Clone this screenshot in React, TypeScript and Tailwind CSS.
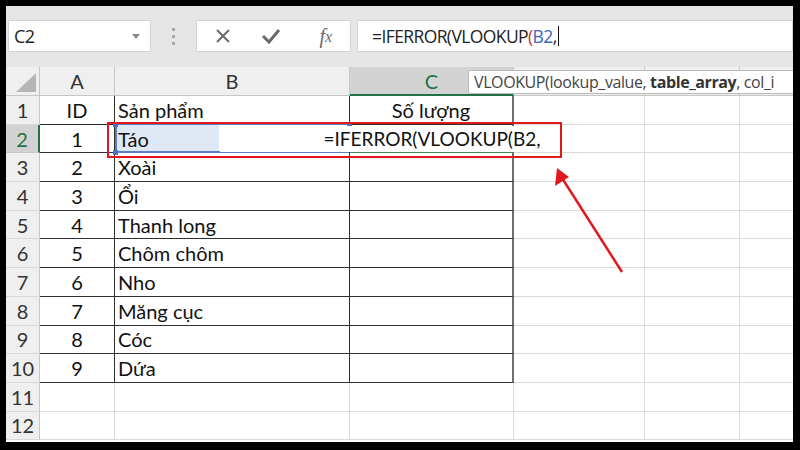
import React from "react";

const cellFont = { fontFamily: "Lato, 'Liberation Sans', sans-serif" };
const uiFont = { fontFamily: "'Open Sans', 'Noto Sans', sans-serif" };

const data: [string, string, string][] = [
  ["ID", "Sản phẩm", "Số lượng"],
  ["1", "Táo", ""],
  ["2", "Xoài", ""],
  ["3", "Ổi", ""],
  ["4", "Thanh long", ""],
  ["5", "Chôm chôm", ""],
  ["6", "Nho", ""],
  ["7", "Măng cục", ""],
  ["8", "Cóc", ""],
  ["9", "Dứa", ""],
  ["", "", ""],
  ["", "", ""],
];

function Row({ idx, vals }: { idx: number; vals: [string, string, string] }) {
  const n = idx + 1;
  const inTable = n <= 10;
  const active = n === 2;
  const tb = inTable ? "border-b-[#2f2f2f]" : "border-b-[#dadada]";
  return (
    <div className="flex h-[28.7px] shrink-0 text-[20px] text-[#111]" style={cellFont}>
      <div
        className={
          active
            ? "w-[34px] shrink-0 flex items-center justify-center bg-[#d2d2d2] text-[#217346] border-r-2 border-r-[#217346] border-b border-b-[#c6c6c6]"
            : "w-[34px] shrink-0 flex items-center justify-center bg-[#efefef] text-[#333] border-r border-r-[#c6c6c6] border-b border-b-[#d8d8d8]"
        }
      >
        {n}
      </div>
      <div className={`w-[75px] shrink-0 flex items-center justify-center border-b border-r ${tb} ${inTable ? "border-r-[#2f2f2f]" : "border-r-[#dadada]"}`}>
        {vals[0]}
      </div>
      <div className={`relative w-[235px] shrink-0 flex items-center pl-[3px] border-b border-r ${tb} ${inTable ? "border-r-[#2f2f2f]" : "border-r-[#dadada]"}`}>
        {active && (
          <>
            <div className="absolute left-0 top-0 bottom-0 w-[104px] bg-[#dfe8f5]" />
            <div className="absolute left-0 right-0 top-[-1px] h-[1px] bg-[#5a7fc4]" />
            <div className="absolute left-0 right-0 bottom-[-1px] h-[2px] bg-[#5a7fc4]" />
            <div className="absolute left-0 top-0 bottom-0 w-[2px] bg-[#5a7fc4]" />
            <div className="absolute left-[-2px] top-[-3px] w-[5px] h-[5px] bg-[#4a72c0]" />
            <div className="absolute left-[-2px] bottom-[-3px] w-[5px] h-[5px] bg-[#4a72c0]" />
            <div className="absolute right-[-3px] top-[-3px] w-[5px] h-[5px] bg-[#4a72c0]" />
          </>
        )}
        <span className="relative">{vals[1]}</span>
      </div>
      <div className={`relative w-[164px] shrink-0 flex items-center justify-center ${inTable ? "border-r-2 border-r-[#6e6e6e]" : "border-r border-r-[#dadada]"} border-b ${tb}`}>
        {active && <div className="absolute left-0 right-[-2px] bottom-[-1px] h-[2px] bg-[#3f8a5e]" />}
        {vals[2]}
      </div>
      <div className="w-[131px] shrink-0 border-r border-b border-[#dadada]" />
      <div className="w-[95px] shrink-0 border-r border-b border-[#dadada]" />
      <div className="flex-1 border-b border-[#dadada]" />
    </div>
  );
}

export default function App() {
  return (
    <div className="w-[800px] h-[450px] bg-black pt-[6px] pl-[6px] pr-[7px] pb-[8px]">
      <div className="relative w-full h-full overflow-hidden bg-white flex flex-col">
        {/* Toolbar */}
        <div className="h-[61px] shrink-0 bg-[#e6e6e6] flex items-start pt-[14px] pl-[2px]" style={uiFont}>
          <div className="w-[143px] h-[32px] bg-white border border-[#d4d4d4] flex items-center justify-between pl-[5px] pr-[10px]">
            <span className="text-[18px] text-[#222] tracking-[-0.5px]">C2</span>
            <svg width="8" height="5" viewBox="0 0 8 5"><path d="M0 0 L8 0 L4 5 Z" fill="#8a8a8a" /></svg>
          </div>
          <div className="w-[45px] h-[32px] flex flex-col items-center justify-center gap-[4px]">
            <div className="w-[3px] h-[3px] bg-[#a8a8a8]" />
            <div className="w-[3px] h-[3px] bg-[#a8a8a8]" />
            <div className="w-[3px] h-[3px] bg-[#a8a8a8]" />
          </div>
          <div className="w-[155px] h-[32px] bg-white border border-[#d4d4d4] flex items-center">
            <div className="w-[50px] flex justify-center pl-[2px]">
              <svg width="16" height="16" viewBox="0 0 16 16"><path d="M2 2 L14 14 M14 2 L2 14" stroke="#6a6a6a" strokeWidth="2" /></svg>
            </div>
            <div className="w-[50px] flex justify-center">
              <svg width="20" height="16" viewBox="0 0 20 16"><path d="M2 8 L8 14 L18 2" stroke="#6a6a6a" strokeWidth="3" fill="none" /></svg>
            </div>
            <div className="w-[55px] flex justify-center pl-[6px] text-[20px] italic text-[#6a6a6a]" style={{ fontFamily: "'Liberation Serif', serif" }}>
              <span>f</span><span className="text-[16px] mt-[4px]">x</span>
            </div>
          </div>
          <div className="flex-1 ml-[6px] h-[32px] bg-white border border-[#d4d4d4] flex items-center pl-[14px] text-[17.5px] tracking-[-0.6px] text-[#222]">
            <span>=IFERROR(VLOOKUP</span>
            <span className="text-[#c0392b]">(</span>
            <span className="text-[#3868c0]">B2</span>
            <span>,</span>
            <span className="w-[1px] h-[20px] bg-[#111] ml-[1px]" />
          </div>
        </div>

        {/* Column headers */}
        <div className="flex h-[29px] shrink-0 text-[20px] text-[#333]" style={cellFont}>
          <div className="relative w-[34px] shrink-0 bg-[#efefef] border-r border-b border-[#c6c6c6]">
            <svg className="absolute right-[3px] bottom-[3px]" width="20" height="19" viewBox="0 0 20 19"><path d="M20 0 L20 19 L0 19 Z" fill="#b6b6b6" /></svg>
          </div>
          <div className="w-[75px] shrink-0 bg-[#efefef] border-r border-b border-[#c6c6c6] flex items-center justify-center">A</div>
          <div className="w-[235px] shrink-0 bg-[#efefef] border-r border-b border-[#c6c6c6] flex items-center justify-center">B</div>
          <div className="w-[164px] shrink-0 bg-[#d3d3d3] border-r border-[#c6c6c6] border-b-2 border-b-[#217346] flex items-center justify-center text-[#217346]">C</div>
          <div className="w-[131px] shrink-0 bg-[#efefef] border-r border-b border-[#c6c6c6]" />
          <div className="w-[95px] shrink-0 bg-[#efefef] border-r border-b border-[#c6c6c6]" />
          <div className="flex-1 bg-[#efefef] border-b border-[#c6c6c6]" />
        </div>

        {data.map((v, i) => (
          <Row key={i} idx={i} vals={v} />
        ))}

        {/* In-cell editor overlay */}
        <div
          className="absolute left-[214px] top-[120px] w-[325px] h-[26px] bg-white flex items-center justify-center text-[19px] text-[#111] pl-[99px]"
          style={cellFont}
        >
          <span className="whitespace-nowrap">=IFERROR(VLOOKUP(B2,</span>
        </div>

        {/* Function tooltip */}
        <div
          className="absolute left-[462px] top-[64px] w-[340px] h-[24px] bg-white border border-[#b9b9b9] rounded-[2px] flex items-center pl-[5px] text-[16px] tracking-[-0.4px] text-[#444] whitespace-nowrap overflow-hidden"
          style={uiFont}
        >
          VLOOKUP(lookup_value,&nbsp;<b className="text-[#333]">table_array</b>, col_i
        </div>

        {/* Red highlight box */}
        <div className="absolute left-[101px] top-[116px] w-[455px] h-[36px] border-2 border-[#e0191e]" />

        {/* Arrow */}
        <svg className="absolute left-0 top-0" width="787" height="436" viewBox="0 0 787 436">
          <line x1="616" y1="266" x2="556" y2="172" stroke="#e0191e" strokeWidth="2.5" />
          <polygon points="551,162 549,180 563,171" fill="#e0191e" />
        </svg>
      </div>
    </div>
  );
}
